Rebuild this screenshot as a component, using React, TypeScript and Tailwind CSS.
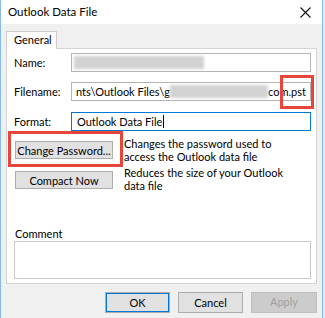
import React from 'react'

const font = { fontFamily: 'Lato, "Noto Sans", Arial, sans-serif' }

function Field({ label, children, focused, className = '' }: { label: string; children: React.ReactNode; focused?: boolean; className?: string }) {
  return (
    <div className={`flex h-[19px] items-center ${className}`}>
      <span className="w-[57px] pl-[7px] box-content text-[11px] leading-none text-black">{label}</span>
      <div
        className={`flex h-[19px] flex-1 items-center overflow-hidden border bg-white text-[11px] leading-none ${
          focused ? 'border-[#0078d7]' : 'border-[#b4b4b4]'
        }`}
      >
        {children}
      </div>
    </div>
  )
}

function Btn({ children, className = '' }: { children: React.ReactNode; className?: string }) {
  return (
    <div
      className={`flex items-center justify-center whitespace-nowrap border border-[#adadad] bg-[#e1e1e1] text-[11px] leading-none text-black ${className}`}
    >
      {children}
    </div>
  )
}

export default function App() {
  return (
    <div className="relative flex h-[318px] w-[325px] overflow-hidden bg-[#ececec]" style={font}>
      <div className="flex h-full w-[323px] flex-col border-l border-r border-[#88b8ea] bg-[#f0f0f0]">
        {/* title bar */}
        <div className="flex h-[24px] items-center justify-between bg-white pl-[7px] pr-[10px]">
          <span className="text-[11.5px] text-black">Outlook Data File</span>
          <svg width="11" height="11" viewBox="0 0 11 11" className="mr-[1px]">
            <path d="M0.5 0.5 L10.5 10.5 M10.5 0.5 L0.5 10.5" stroke="#111" strokeWidth="1.1" />
          </svg>
        </div>

        {/* body */}
        <div className="flex flex-1 flex-col px-[5px] pt-[7px]">
          <div className="relative z-10 -mb-px flex h-[18px] w-[51px] items-center border border-b-0 border-[#cdcdcd] bg-white pl-[7px] text-[11px] text-black">
            General
          </div>
          <div className="flex h-[236px] flex-col border border-[#d4d4d4] bg-white pr-[5px] pt-[4px]">
            <Field label="Name:">
              <div className="ml-[2px] h-[13px] w-[130px] bg-[#d2d2d2] blur-[1.5px]" />
            </Field>
            <Field label="Filename:" className="mt-[10px]">
              <span className="whitespace-nowrap pl-[4px]">nts\Outlook Files\g</span>
              <div className="h-[13px] flex-1 bg-[#d2d2d2] blur-[1.5px]" />
              <span className="whitespace-nowrap pr-[4px]">com.pst</span>
            </Field>
            <Field label="Format:" focused className="mt-[11px]">
              <span className="whitespace-nowrap pl-[5px]">Outlook Data File</span>
              <span className="ml-px h-[13px] w-px bg-black" />
            </Field>

            <div className="mt-[6px] flex items-start pl-[8px]">
              <Btn className="mt-[4px] h-[18px] w-[98px]">Change Password...</Btn>
              <p className="ml-[11px] whitespace-nowrap text-[11px] leading-[13px] text-black">
                Changes the password used to
                <br />
                access the Outlook data file
              </p>
            </div>
            <div className="mt-[3px] flex items-start pl-[8px]">
              <Btn className="mt-[5px] h-[18px] w-[98px]">Compact Now</Btn>
              <p className="ml-[11px] whitespace-nowrap text-[11px] leading-[13px] text-black">
                Reduces the size of your Outlook
                <br />
                data file
              </p>
            </div>

            <div className="mt-[35px] pl-[8px] text-[11px] leading-[13px] text-black">Comment</div>
            <div className="ml-[7px] mt-px h-[38px] border border-[#c8c8c8] bg-white" />
          </div>

          <div className="mt-[8px] flex justify-end gap-[8px]">
            <Btn className="h-[21px] w-[65px] border-[#0078d7] shadow-[inset_0_0_0_1px_#0078d7]">OK</Btn>
            <Btn className="h-[21px] w-[65px]">Cancel</Btn>
            <div className="flex h-[21px] w-[66px] items-center justify-center border border-[#bfbfbf] bg-[#cccccc] text-[11px] text-[#a0a0a0]">
              Apply
            </div>
          </div>
        </div>
      </div>

      {/* highlight boxes */}
      <div className="absolute left-[280px] top-[75px] h-[34px] w-[34px] border-[3px] border-[#e8453c]" />
      <div className="absolute left-[8px] top-[131px] h-[36px] w-[115px] border-[3px] border-[#e8453c]" />
    </div>
  )
}
